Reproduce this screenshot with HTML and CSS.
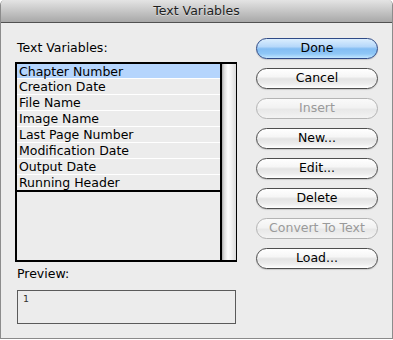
FILE: index.html
```html
<!DOCTYPE html>
<html lang="en">
<head>
<meta charset="UTF-8">
<meta name="viewport" content="width=device-width, initial-scale=1.0">
<title>Text Variables</title>
<link rel="stylesheet" href="styles.css">
</head>
<body>

<div class="dialog">
  <div class="titlebar">Text Variables</div>

  <div class="content">
    <div class="left-col">
      <div class="label">Text Variables:</div>

      <div class="var-list">
        <div class="var-pane">
          <div class="var-row selected">Chapter Number</div>
          <div class="var-row">Creation Date</div>
          <div class="var-row">File Name</div>
          <div class="var-row">Image Name</div>
          <div class="var-row">Last Page Number</div>
          <div class="var-row">Modification Date</div>
          <div class="var-row">Output Date</div>
          <div class="var-row last">Running Header</div>
        </div>
        <div class="scroll-track"></div>
      </div>

      <div class="label preview-label">Preview:</div>
      <div class="preview-box">1</div>
    </div>

    <div class="buttons">
      <button class="btn default">Done</button>
      <button class="btn">Cancel</button>
      <button class="btn" disabled>Insert</button>
      <button class="btn">New...</button>
      <button class="btn">Edit...</button>
      <button class="btn">Delete</button>
      <button class="btn" disabled>Convert To Text</button>
      <button class="btn">Load...</button>
    </div>
  </div>
</div>

</body>
</html>
```

FILE: styles.css
```css
html {
  background: #fff;
}
body {
  margin: 0;
  padding: 0;
  font-family: "DejaVu Sans", sans-serif;
  font-size: 12.5px;
  color: #000;
}
.dialog {
  width: 393px;
  height: 339px;
  box-sizing: border-box;
  background-color: #ececec;
  border-left: 1px solid #8c8c8c;
  border-right: 1px solid #8c8c8c;
  border-bottom: 1px solid #8a8a8a;
  border-radius: 5px 5px 0 0;
  overflow: hidden;
}
.titlebar {
  height: 22px;
  line-height: 22px;
  text-align: center;
  color: #1e1e1e;
  background: linear-gradient(#e4e4e4, #a8a8a8);
  border-bottom: 1px solid #515151;
  text-shadow: 0 1px 0 rgba(255, 255, 255, 0.45);
}
.content {
  display: flex;
  gap: 19px;
  padding: 15px 14px 0 14px;
}
.left-col {
  width: 222px;
  padding-top: 2px;
}
.label {
  line-height: 15px;
  padding-left: 2px;
}
.var-list {
  display: flex;
  height: 200px;
  margin-top: 7px;
  box-sizing: border-box;
  border: 2px solid #000;
  border-right-width: 1px;
}
.var-pane {
  width: 203px;
  flex: none;
  border-right: 2px solid #000;
}
.var-row {
  height: 15px;
  line-height: 16px;
  padding-left: 2px;
  border-bottom: 1px solid #fff;
  white-space: nowrap;
}
.var-row.selected {
  height: 14px;
  line-height: 15px;
  background-color: #b5d5fd;
}
.var-row.last {
  border-bottom: 2px solid #000;
}
.scroll-track {
  flex: 1;
  background: linear-gradient(to right, #a9a9a9 0, #dcdcdc 2px, #fff 6px, #f7f7f7 8px, #dadada 100%);
}
.preview-label {
  margin-top: 4px;
}
.preview-box {
  width: 219px;
  height: 34px;
  margin: 9px 0 0 2px;
  box-sizing: border-box;
  border: 1px solid #5a5a5a;
  padding: 2px 0 0 5px;
  font-size: 9.5px;
  line-height: 11px;
  color: #333;
}
.buttons {
  display: flex;
  flex-direction: column;
  gap: 9px;
  width: 122px;
}
.btn {
  height: 21px;
  box-sizing: border-box;
  padding: 0 0 1px;
  font-family: "DejaVu Sans", sans-serif;
  font-size: 12.5px;
  line-height: 18px;
  color: #000;
  border: 1px solid #4e4e4e;
  border-radius: 11px;
  background: linear-gradient(#ffffff 0%, #f6f6f6 40%, #e4e4e4 52%, #ededed 78%, #ffffff 100%);
  box-shadow: 0 1px 1px rgba(0, 0, 0, 0.15);
}
.btn.default {
  border-color: #2f4a86;
  background: linear-gradient(#dbeefe 0%, #b6d8fa 40%, #83bdf3 52%, #8fc7f6 78%, #c2e6ff 100%);
}
.btn:disabled {
  color: #9a9a9a;
  border-color: #b4b4b4;
  background: linear-gradient(#fafafa 0%, #f2f2f2 45%, #e8e8e8 55%, #f3f3f3 100%);
  box-shadow: none;
}
```
